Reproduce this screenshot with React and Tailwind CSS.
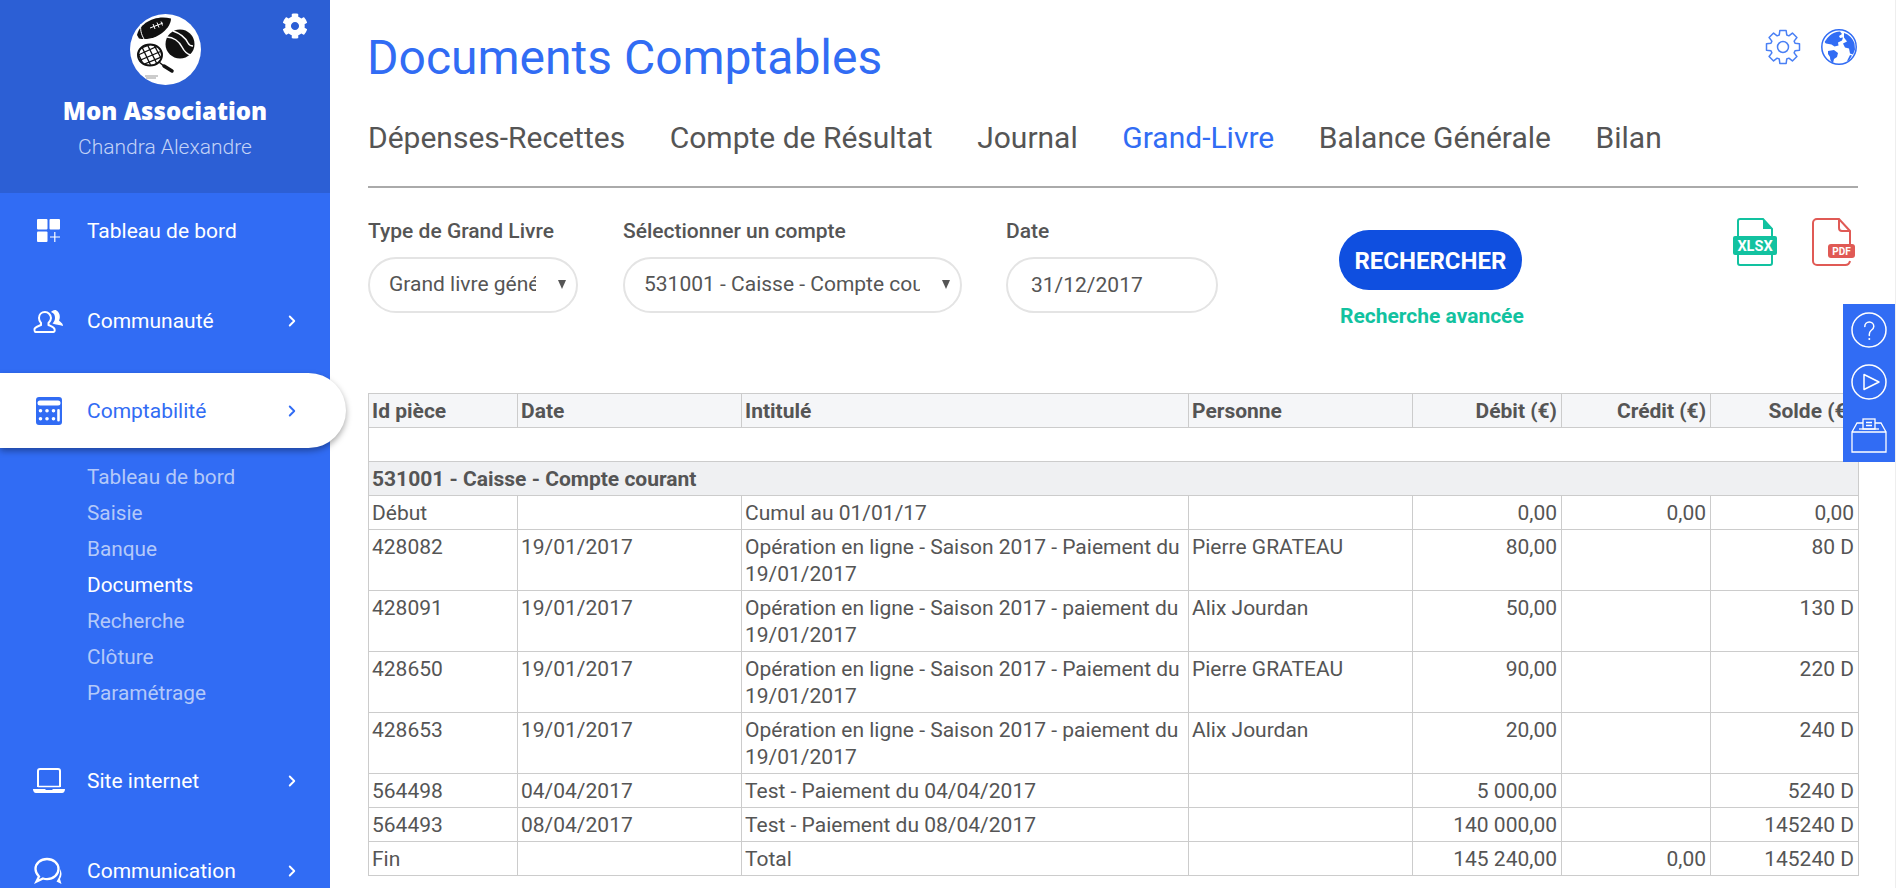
import React from 'react';
import { FaCog } from 'react-icons/fa';
import { ChevronRight } from 'lucide-react';

const menuTop = [
    { label: 'Tableau de bord', icon: <DashIcon /> },
    { label: 'Communauté', icon: <PeopleIcon />, arrow: true },
];

const subMenu = ['Tableau de bord', 'Saisie', 'Banque', 'Documents', 'Recherche', 'Clôture', 'Paramétrage'];

const tabs = ['Dépenses-Recettes', 'Compte de Résultat', 'Journal', 'Grand-Livre', 'Balance Générale', 'Bilan'];

const rows = [
    ['Début', '', 'Cumul au 01/01/17', '', '0,00', '0,00', '0,00'],
    ['428082', '19/01/2017', 'Opération en ligne - Saison 2017 - Paiement du 19/01/2017', 'Pierre GRATEAU', '80,00', '', '80 D'],
    ['428091', '19/01/2017', 'Opération en ligne - Saison 2017 - paiement du 19/01/2017', 'Alix Jourdan', '50,00', '', '130 D'],
    ['428650', '19/01/2017', 'Opération en ligne - Saison 2017 - Paiement du 19/01/2017', 'Pierre GRATEAU', '90,00', '', '220 D'],
    ['428653', '19/01/2017', 'Opération en ligne - Saison 2017 - paiement du 19/01/2017', 'Alix Jourdan', '20,00', '', '240 D'],
    ['564498', '04/04/2017', 'Test - Paiement du 04/04/2017', '', '5 000,00', '', '5240 D'],
    ['564493', '08/04/2017', 'Test - Paiement du 08/04/2017', '', '140 000,00', '', '145240 D'],
    ['Fin', '', 'Total', '', '145 240,00', '0,00', '145240 D'],
];

function DashIcon() {
    return (
        <svg width="24" height="24" viewBox="0 0 24 24" fill="white">
            <rect x="0" y="0" width="10.5" height="10.5" rx="1" />
            <rect x="12.5" y="0" width="10.5" height="10.5" rx="1" />
            <rect x="0" y="12.5" width="10.5" height="10.5" rx="1" />
            <path d="M17.2 13h1.2v4.4H23v1.2h-4.6V23h-1.2v-4.4H13v-1.2h4.2z" />
        </svg>
    );
}

function PeopleIcon() {
    return (
        <svg width="32" height="24" viewBox="0 0 32 24" fill="none">
            <path d="M18 3c3 1 4 3 4 6 0 2-1 4-2.500 5.500 3 1 7 1.500 10.500 2.500 0-3-3-4-4-5.500 1-2 1-4 .5-6S24 1 22 1s-3 1-4 2z" fill="white" />
            <path d="M12 3c-3.500 0-6 2.500-6 6 0 2 1 4 2 5v2c-2 1-6 2-6.500 4 0 1.500 0 3 1 3h18c1 0 1.500-1 1-3-.5-2-4-3-6-4v-2c1.500-1.500 2.500-3 2.500-5 0-3.500-3-6-6-6z" stroke="white" strokeWidth="2" fill="#316cf4" />
        </svg>
    );
}

function CalcIcon() {
    return (
        <svg width="26" height="28" viewBox="0 0 26 28" fill="#316cf4">
            <path fillRule="evenodd" d="M3 0h20a3 3 0 0 1 3 3v22a3 3 0 0 1-3 3H3a3 3 0 0 1-3-3V3a3 3 0 0 1 3-3zm1 3.500a1.500 1.500 0 0 0 0 5h18a1.500 1.500 0 0 0 0-5zM4.500 12a1.800 1.800 0 1 0 0 3.600 1.800 1.800 0 0 0 0-3.600zm6.500 0a1.800 1.800 0 1 0 0 3.600 1.800 1.800 0 0 0 0-3.600zm6.500 0a1.800 1.800 0 1 0 0 3.600 1.800 1.800 0 0 0 0-3.600zm5 0a1.300 1.300 0 0 0-1.300 1.300v10a1.300 1.300 0 0 0 2.600 0v-10a1.300 1.300 0 0 0-1.300-1.300zM4.500 20a1.800 1.800 0 1 0 0 3.600 1.800 1.800 0 0 0 0-3.600zm6.500 0a1.800 1.800 0 1 0 0 3.600 1.800 1.800 0 0 0 0-3.600zm6.500 0a1.800 1.800 0 1 0 0 3.600 1.800 1.800 0 0 0 0-3.600z" />
        </svg>
    );
}

function LaptopIcon() {
    return (
        <svg width="32" height="26" viewBox="0 0 32 26" fill="none">
            <path d="M5 19V3a2 2 0 0 1 2-2h18a2 2 0 0 1 2 2v16" stroke="white" strokeWidth="2" />
            <path d="M5 18.500h22" stroke="white" strokeWidth="1.500" />
            <path d="M0 21h12l1 1h6l1-1h12c0 2-1 4-3 4H3c-2 0-3-2-3-4z" fill="white" />
        </svg>
    );
}

function ChatIcon() {
    return (
        <svg width="32" height="28" viewBox="0 0 32 28" fill="none">
            <path d="M14 2C7.500 2 2.500 6.500 2.500 12c0 3 1.500 5.500 3.500 7.500L3.500 24.500 10 21.500c1.300.4 2.600.6 4 .6 6.500 0 11.500-4.500 11.500-10.100S20.500 2 14 2z" stroke="white" strokeWidth="2.300" />
            <path d="M27 12c2 3 2 7 0 10l1.500 5-5-2.500 1-1.500c2-3 3-7 2.500-11z" fill="white" />
        </svg>
    );
}

function Avatar() {
    return (
        <svg width="71" height="71" viewBox="0 0 71 71">
            <defs>
                <clipPath id="racket-head"><ellipse cx="20" cy="41" rx="11.500" ry="10" /></clipPath>
            </defs>
            <circle cx="35.500" cy="35.500" r="35.500" fill="white" />
            {/* ballon */}
            <path d="M7 21C9 10 25 0 41 4.500 41 15 25 28 9 24.500z" fill="#111" />
            <path d="M11 10c-1 5 0 10 3 15M20 14l13-5M23 10l2 5M27 8.500l2 5M31 7.500l1.500 4" stroke="white" strokeWidth="1" fill="none" />
            {/* balle */}
            <circle cx="50" cy="30" r="14.500" fill="#111" />
            <path d="M37 23c6 0 12 4 15 10 2 4 4 7 9 8M43 17c6 2 12 6 15 12 1 2 3 3 5 3" stroke="white" strokeWidth="1.500" fill="none" />
            {/* raquette */}
            <ellipse cx="20" cy="41" rx="12" ry="10.500" fill="white" stroke="#111" strokeWidth="2" />
            <g clipPath="url(#racket-head)" stroke="#111" strokeWidth="1.300">
                <path d="M4 37 24 29M4 43 30 31M6 48 34 36M12 51 34 42" />
                <path d="M10 29 22 54M16 28 28 52M22 27 33 48M5 33 15 54" />
            </g>
            <path d="M29 48l6 5" stroke="#111" strokeWidth="1.500" />
            <path d="M34 52l8 5" stroke="#111" strokeWidth="3.500" strokeLinecap="round" />
            <path d="M15 62h13M16 64h10" stroke="#999" strokeWidth="1" />
        </svg>
    );
}

// 8-tooth cog outline
const gearPoints = Array.from({ length: 8 }, (_, i) => {
    const a = (i * Math.PI) / 4;
    return [[12.6, -0.3], [16.8, -0.19], [16.8, 0.19], [12.6, 0.3]]
        .map(([r, d]) => `${(18 + r * Math.sin(a + d)).toFixed(2)},${(18 - r * Math.cos(a + d)).toFixed(2)}`)
        .join(' ');
}).join(' ');

function Gear() {
    return (
        <svg width="36" height="36" viewBox="0 0 36 36" fill="none" stroke="#4a80f5" strokeWidth="1.500" strokeLinejoin="round">
            <polygon points={gearPoints} />
            <circle cx="18" cy="18" r="5.500" />
        </svg>
    );
}

function Globe() {
    return (
        <svg width="36" height="36" viewBox="0 0 36 36">
            <circle cx="18" cy="18" r="17.200" fill="white" stroke="#316cf4" strokeWidth="1.500" />
            <path d="M5 11C8 6 13 3 19 2.500l2 2.500-3 2 1 2 3-.5-1 3-4 2 .5 3-4 1-3-2-5.500-1C3 13 4 12 5 11z" fill="#316cf4" />
            <path d="M23 4c5 1.500 9 5.500 10.500 10.500l.5 6-2 5-3-1-1-5-4-1-2-4 4-2-3-4z" fill="#316cf4" />
            <path d="M7 22l6-1 4 3-1 4-3 2-1 4c-2-1-3-3-3-6l-2-3z" fill="#316cf4" />
            <path d="M29 26l2 .5-3 5-2 .5z" fill="#316cf4" />
        </svg>
    );
}

function FileXlsx() {
    return (
        <svg width="44" height="48" viewBox="0 0 44 48" fill="none">
            <path d="M5 19V3a2 2 0 0 1 2-2h23l9 10v8M39 37v8a2 2 0 0 1-2 2H7a2 2 0 0 1-2-2v-8" stroke="#12c2a0" strokeWidth="2" />
            <path d="M30 1v10h9z" fill="#12c2a0" />
            <rect x="0" y="18" width="44" height="19" rx="2" fill="#12c2a0" />
            <text x="22" y="33" textAnchor="middle" fill="white" fontSize="14.500" fontWeight="700" fontFamily="Roboto, sans-serif">XLSX</text>
        </svg>
    );
}

function FilePdf() {
    return (
        <svg width="44" height="48" viewBox="0 0 44 48" fill="none">
            <path d="M38 26V13L27 1H5a4 4 0 0 0-4 4v38a4 4 0 0 0 4 4h28a5 5 0 0 0 5-4" stroke="#e05a55" strokeWidth="2" />
            <path d="M27 2v8a3 3 0 0 0 3 3h8" stroke="#e05a55" strokeWidth="2" />
            <rect x="16" y="26" width="27" height="14" rx="3" fill="#e05a55" />
            <text x="29.500" y="36.500" textAnchor="middle" fill="white" fontSize="10" fontWeight="700" fontFamily="Roboto, sans-serif">PDF</text>
        </svg>
    );
}

function HelpIcon() {
    return (
        <svg width="36" height="36" viewBox="0 0 36 36" fill="none" stroke="white" strokeWidth="1.500">
            <circle cx="18" cy="18" r="17" />
            <path d="M13.800 14.500c0-2.500 2-4.500 4.500-4.500s4.500 2 4.500 4.500c0 2-1.300 3-2.700 4s-1.800 2-1.800 4v1" strokeLinecap="round" />
            <circle cx="18.300" cy="27" r="1" fill="white" stroke="none" />
        </svg>
    );
}

function PlayIcon() {
    return (
        <svg width="36" height="36" viewBox="0 0 36 36" fill="none" stroke="white" strokeWidth="1.500" strokeLinejoin="round">
            <circle cx="18" cy="18" r="17" />
            <path d="M13 10.500v15L28 18z" />
        </svg>
    );
}

function BallotBox() {
    return (
        <svg width="36" height="35" viewBox="0 0 36 35" fill="none" stroke="white" strokeWidth="1.300">
            <path d="M1 14 6 5h6M24 5h6l5 9M1 14h34v20H1z" />
            <rect x="12" y="1" width="12" height="10" />
            <path d="M15 4.500h6M15 7.500h6" />
            <path d="M8 11h20" />
        </svg>
    );
}

function MenuItem({ label, icon, arrow, active }) {
    return (
        <div className={`relative flex items-center h-[75px] pl-[87px] text-[21px] ${active ? 'w-[346px] bg-white text-[#316cf4] rounded-r-[38px] shadow-[0_3px_6px_rgba(0,0,0,0.35)]' : 'w-[330px] text-white'}`}>
            <span className="absolute left-[33px] w-[32px] flex justify-center">{icon}</span>
            <span className="pt-[2px]">{label}</span>
            {arrow && <ChevronRight size={18} strokeWidth={2.5} className="absolute left-[283px]" />}
        </div>
    );
}

function Field({ label, className, children }) {
    return (
        <div className={className}>
            <div className="text-[21px] leading-[27px] font-medium text-[#555] mb-[12px]">{label}</div>
            {children}
        </div>
    );
}

function PillSelect({ value }) {
    return (
        <div className="relative">
            <select defaultValue={value} className="appearance-none h-[56px] w-full rounded-[28px] border-2 border-[#e4e4e4] bg-white pl-[19px] pr-[40px] text-[21px] text-[#555] outline-none">
                <option value={value}>{value}</option>
            </select>
            <span className="absolute right-[12px] top-[23px] w-0 h-0 border-x-[4.5px] border-x-transparent border-t-[9px] border-t-[#555]"></span>
        </div>
    );
}

const cellCls = 'border border-[#cccccc] pt-[4px] pb-[2px] pl-[3px] pr-[4px]';

const App = () => {
    return (
        <div className="flex h-screen overflow-hidden bg-white font-['Roboto',sans-serif] text-[#555] border-r border-[#eeeeee]">
            {/* Sidebar */}
            <aside className="relative z-10 w-[330px] shrink-0 bg-[#316cf4]">
                <div className="relative h-[193px] bg-[#2c5fd5] flex flex-col items-center pt-[14px]">
                    <Avatar />
                    <FaCog size={26} className="absolute left-[282px] top-[13px] text-white" />
                    <div className="mt-[11px] font-['Open_Sans',sans-serif] font-extrabold text-[24px] leading-[30px] text-white">Mon Association</div>
                    <div className="mt-[8px] text-[21px] leading-[26px] font-light text-[#c3d3f7]">Chandra Alexandre</div>
                </div>
                <MenuItem {...menuTop[0]} />
                <div className="mt-[15px]"><MenuItem {...menuTop[1]} /></div>
                <div className="mt-[15px]"><MenuItem label="Comptabilité" icon={<CalcIcon />} arrow active /></div>
                <ul className="mt-[11px] pl-[87px] text-[20.8px] leading-[36px] text-[#b4c9f9]">
                    {subMenu.map((item) => (
                        <li key={item} className={item === 'Documents' ? 'text-white' : ''}>{item}</li>
                    ))}
                </ul>
                <div className="mt-[32px]"><MenuItem label="Site internet" icon={<LaptopIcon />} arrow /></div>
                <div className="mt-[15px]"><MenuItem label="Communication" icon={<ChatIcon />} arrow /></div>
            </aside>

            {/* Main */}
            <main className="relative flex-1 min-w-0 pl-[38px] pr-[37px]">
                <div className="flex justify-between pt-[28px] h-[90px]">
                    <h1 className="text-[48px] leading-[60px] text-[#316cf4] -ml-[1px]">Documents Comptables</h1>
                    <div className="flex gap-[20px] pt-[1px] pr-[1px]">
                        <Gear />
                        <Globe />
                    </div>
                </div>
                <nav className="flex gap-[44.6px] h-[98px] pt-[28px] border-b-2 border-[#aaaaaa] text-[30px] leading-[40px]">
                    {tabs.map((tab) => (
                        <span key={tab} className={tab === 'Grand-Livre' ? 'text-[#316cf4]' : 'text-[#555]'}>{tab}</span>
                    ))}
                </nav>

                {/* Filters */}
                <div className="flex h-[205px] pt-[30px]">
                    <Field label="Type de Grand Livre" className="w-[210px] mr-[45px]">
                        <PillSelect value="Grand livre général" />
                    </Field>
                    <Field label="Sélectionner un compte" className="w-[339px] mr-[44px]">
                        <PillSelect value="531001 - Caisse - Compte courant" />
                    </Field>
                    <Field label="Date" className="w-[212px] mr-[119px]">
                        <input type="text" defaultValue="31/12/2017" className="h-[56px] w-full rounded-[28px] border-2 border-[#e4e4e4] bg-white pl-[23px] text-[21px] text-[#555] outline-none" />
                    </Field>
                    <div className="flex flex-col items-center pt-[12px]">
                        <button className="h-[60px] w-[183px] rounded-[30px] bg-[#0f4fe0] text-white text-[24px] font-bold pt-[2px]">RECHERCHER</button>
                        <a className="mt-[13px] ml-[3px] text-[#12c2a0] text-[21px] leading-[27px] font-bold">Recherche avancée</a>
                    </div>
                    <div className="ml-auto flex gap-[35px] mr-[2px]">
                        <FileXlsx />
                        <FilePdf />
                    </div>
                </div>

                {/* Table */}
                <table className="w-[1490px] table-fixed border-collapse text-[21px] leading-[27px] text-[#555]">
                    <colgroup>
                        <col className="w-[149px]" />
                        <col className="w-[224px]" />
                        <col className="w-[447px]" />
                        <col className="w-[224px]" />
                        <col className="w-[149px]" />
                        <col className="w-[149px]" />
                        <col className="w-[148px]" />
                    </colgroup>
                    <thead>
                        <tr className="bg-[#f5f6f8]">
                            {['Id pièce', 'Date', 'Intitulé', 'Personne'].map((h) => (
                                <th key={h} className={`${cellCls} font-bold text-left`}>{h}</th>
                            ))}
                            {['Débit (€)', 'Crédit (€)', 'Solde (€)'].map((h) => (
                                <th key={h} className={`${cellCls} font-bold text-right`}>{h}</th>
                            ))}
                        </tr>
                    </thead>
                    <tbody>
                        <tr><td colSpan={7} className={`${cellCls} h-[34px]`}></td></tr>
                        <tr className="bg-[#eff0f2]"><td colSpan={7} className={`${cellCls} font-bold`}>531001 - Caisse - Compte courant</td></tr>
                        {rows.map((row) => (
                            <tr key={row[0]}>
                                {row.map((cell, i) => (
                                    <td key={i} className={`${cellCls} align-top ${i > 3 ? 'text-right' : 'text-left'}`}>{cell}</td>
                                ))}
                            </tr>
                        ))}
                    </tbody>
                </table>

                {/* Help panel */}
                <div className="absolute right-0 top-[304px] w-[52px] h-[158px] bg-[#316cf4] flex flex-col items-center pt-[8px]">
                    <HelpIcon />
                    <div className="mt-[16px]"><PlayIcon /></div>
                    <div className="mt-[18px]"><BallotBox /></div>
                </div>
            </main>
        </div>
    );
};

export default App;
